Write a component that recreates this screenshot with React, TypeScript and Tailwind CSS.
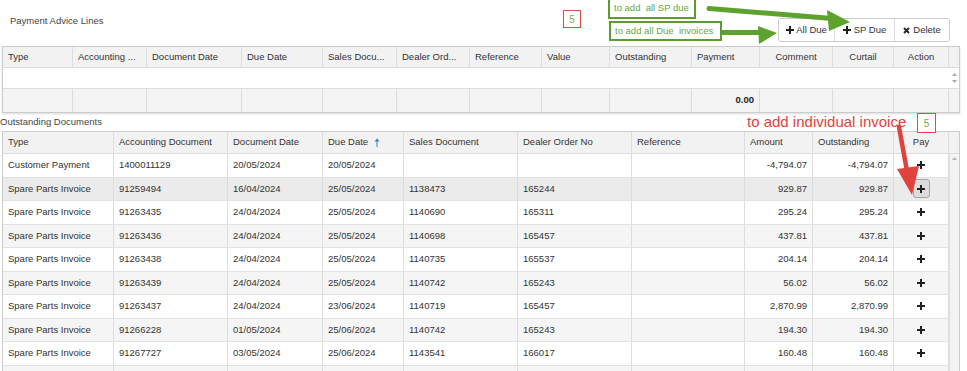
import React from "react";

type Row = {
  type: string;
  acc: string;
  docDate: string;
  dueDate: string;
  sales: string;
  dealer: string;
  amount: string;
};

const rows: Row[] = [
  { type: "Customer Payment", acc: "1400011129", docDate: "20/05/2024", dueDate: "20/05/2024", sales: "", dealer: "", amount: "-4,794.07" },
  { type: "Spare Parts Invoice", acc: "91259494", docDate: "16/04/2024", dueDate: "25/05/2024", sales: "1138473", dealer: "165244", amount: "929.87" },
  { type: "Spare Parts Invoice", acc: "91263435", docDate: "24/04/2024", dueDate: "25/05/2024", sales: "1140690", dealer: "165311", amount: "295.24" },
  { type: "Spare Parts Invoice", acc: "91263436", docDate: "24/04/2024", dueDate: "25/05/2024", sales: "1140698", dealer: "165457", amount: "437.81" },
  { type: "Spare Parts Invoice", acc: "91263438", docDate: "24/04/2024", dueDate: "25/05/2024", sales: "1140735", dealer: "165537", amount: "204.14" },
  { type: "Spare Parts Invoice", acc: "91263439", docDate: "24/04/2024", dueDate: "25/05/2024", sales: "1140742", dealer: "165243", amount: "56.02" },
  { type: "Spare Parts Invoice", acc: "91263437", docDate: "24/04/2024", dueDate: "23/06/2024", sales: "1140719", dealer: "165457", amount: "2,870.99" },
  { type: "Spare Parts Invoice", acc: "91266228", docDate: "01/05/2024", dueDate: "25/06/2024", sales: "1140742", dealer: "165243", amount: "194.30" },
  { type: "Spare Parts Invoice", acc: "91267727", docDate: "03/05/2024", dueDate: "25/06/2024", sales: "1143541", dealer: "166017", amount: "160.48" },
];

const topCols =
  "grid grid-cols-[70px_74px_95px_81px_74px_73px_72px_68px_82px_68px_73px_61px_55px_10px]";
const botCols =
  "grid grid-cols-[111px_114px_95px_81px_114px_114px_113px_68px_81px_55px]";

const PlusIcon = ({ size = 8 }: { size?: number }) => (
  <svg width={size} height={size} viewBox="0 0 8 8" className="shrink-0">
    <rect x="3" y="0" width="2" height="8" fill="#222" />
    <rect x="0" y="3" width="8" height="2" fill="#222" />
  </svg>
);

const XIcon = () => (
  <svg width="7" height="7" viewBox="0 0 7 7" className="shrink-0">
    <path d="M1 1 L6 6 M6 1 L1 6" stroke="#222" strokeWidth="1.8" />
  </svg>
);

const Cell = ({ children, className = "" }: { children?: React.ReactNode; className?: string }) => (
  <div className={`flex items-center px-[5px] border-r border-[#dddddd] whitespace-nowrap overflow-hidden ${className}`}>
    {children}
  </div>
);

export default function App() {
  const topHeads = [
    "Type",
    "Accounting ...",
    "Document Date",
    "Due Date",
    "Sales Docu...",
    "Dealer Ord...",
    "Reference",
    "Value",
    "Outstanding",
    "Payment",
  ];

  return (
    <div className="relative w-[967px] h-[371px] overflow-hidden bg-white text-[#333333] text-[9.5px] font-['Liberation_Sans',Arial,sans-serif]">
      {/* top toolbar */}
      <div className="flex justify-between h-[46px] pr-[17px]">
        <div className="pl-[10px] pt-[14px] text-[#444444]">Payment Advice Lines</div>
        <div className="flex mt-[18px] h-[24px] border border-[#cccccc] rounded-[3px] bg-white">
          <button className="flex items-center justify-center gap-[2px] w-[56px] border-r border-[#dddddd] text-[#333333]">
            <PlusIcon />
            All Due
          </button>
          <button className="flex items-center justify-center gap-[3px] w-[60px] border-r border-[#dddddd] text-[#333333]">
            <PlusIcon />
            SP Due
          </button>
          <button className="flex items-center justify-center gap-[3px] w-[54px] text-[#333333]">
            <XIcon />
            Delete
          </button>
        </div>
      </div>

      {/* payment advice grid */}
      <div className="ml-[2px] w-[958px] border border-[#cccccc] shadow-[0_1px_2px_rgba(0,0,0,0.15)]">
        <div className={`${topCols} h-[21px] bg-[#f2f2f2] border-b border-[#dddddd]`}>
          {topHeads.map((h) => (
            <Cell key={h}>{h}</Cell>
          ))}
          <Cell className="justify-center">Comment</Cell>
          <Cell className="justify-center">Curtail</Cell>
          <Cell className="justify-center">Action</Cell>
          <div />
        </div>
        <div className="flex h-[21px] border-b border-[#dddddd] bg-white">
          <div className="flex-1" />
          <div className="w-[10px] flex flex-col items-center justify-center gap-[4px]">
            <svg width="5" height="3" viewBox="0 0 5 3"><path d="M0 3 L2.5 0 L5 3Z" fill="#aaaaaa" /></svg>
            <svg width="5" height="3" viewBox="0 0 5 3"><path d="M0 0 L2.5 3 L5 0Z" fill="#aaaaaa" /></svg>
          </div>
        </div>
        <div className={`${topCols} h-[23px] bg-[#f4f4f4]`}>
          {Array.from({ length: 9 }).map((_, i) => (
            <Cell key={i} />
          ))}
          <Cell className="justify-end font-bold text-[#222222]">0.00</Cell>
          <Cell />
          <Cell />
          <Cell />
          <div />
        </div>
      </div>

      {/* outstanding documents */}
      <div className="h-[18px] flex items-center text-[#444444]">Outstanding Documents</div>
      <div className="ml-[2px] w-[958px] border border-[#cccccc]">
        <div className="flex h-[22px] bg-[#f2f2f2] border-b border-[#dddddd]">
          <div className={botCols}>
            <Cell>Type</Cell>
            <Cell>Accounting Document</Cell>
            <Cell>Document Date</Cell>
            <Cell className="gap-[6px]">
              Due Date
              <svg width="6" height="9" viewBox="0 0 6 9">
                <path d="M3 9 V1.5" stroke="#3b7fd4" strokeWidth="1" />
                <path d="M0.5 3.5 L3 0.5 L5.5 3.5Z" fill="#3b7fd4" />
              </svg>
            </Cell>
            <Cell>Sales Document</Cell>
            <Cell>Dealer Order No</Cell>
            <Cell>Reference</Cell>
            <Cell>Amount</Cell>
            <Cell>Outstanding</Cell>
            <Cell className="justify-center">Pay</Cell>
          </div>
          <div className="w-[10px]" />
        </div>
        <div className="flex">
          <div className="flex flex-col">
            {rows.map((r, i) => (
              <div
                key={r.acc}
                className={`${botCols} h-[23.5px] border-b border-[#e2e2e2] ${
                  i === 1 ? "bg-[#ebebeb]" : i % 2 === 1 ? "bg-[#f5f5f5]" : "bg-white"
                }`}
              >
                <Cell>{r.type}</Cell>
                <Cell>{r.acc}</Cell>
                <Cell>{r.docDate}</Cell>
                <Cell>{r.dueDate}</Cell>
                <Cell>{r.sales}</Cell>
                <Cell>{r.dealer}</Cell>
                <Cell />
                <Cell className="justify-end">{r.amount}</Cell>
                <Cell className="justify-end">{r.amount}</Cell>
                <Cell className="justify-center">
                  {i === 1 ? (
                    <div className="flex items-center justify-center w-[17px] h-[19px] bg-[#dcdcdc] border border-[#a5a5a5] rounded-[3px]">
                      <PlusIcon />
                    </div>
                  ) : (
                    <PlusIcon />
                  )}
                </Cell>
              </div>
            ))}
            <div className={`${botCols} h-[23.5px] bg-[#f5f5f5]`}>
              {Array.from({ length: 10 }).map((_, i) => (
                <Cell key={i} />
              ))}
            </div>
          </div>
          <div className="w-[10px] bg-[#f3f3f3] border-l border-[#e0e0e0] flex justify-center pt-[3px]">
            <svg width="5" height="3" viewBox="0 0 5 3"><path d="M0 3 L2.5 0 L5 3Z" fill="#b5b5b5" /></svg>
          </div>
        </div>
      </div>

      {/* annotations */}
      <div className="absolute left-[563px] top-[10px] w-[18px] h-[18px] border-[1.5px] border-[#e04a45] flex items-center justify-center text-[10px] text-[#74ad43]">
        5
      </div>
      <div className="absolute left-[608px] top-[-2px] w-[88px] h-[21px] border-2 border-[#5b9b30] bg-white flex items-center pl-[4px] text-[9.5px] text-[#64a83a] whitespace-pre">
        to add  all SP due
      </div>
      <div className="absolute left-[609px] top-[21px] w-[113px] h-[20px] border-2 border-[#5b9b30] bg-white flex items-center pl-[4px] text-[9.5px] text-[#64a83a] whitespace-pre">
        to add all Due  invoices
      </div>
      <div className="absolute left-[747px] top-[113px] text-[15px] leading-[18px] text-[#e5403b]">
        to add individual invoice
      </div>
      <div className="absolute left-[917px] top-[113px] w-[19px] h-[20px] border-[1.5px] border-[#e04a45] bg-white flex items-center justify-center text-[10px] text-[#74ad43]">
        5
      </div>

      <svg className="absolute left-0 top-0 pointer-events-none" width="967" height="371">
        <path d="M709 8.5 L832 18.5" stroke="#5ea22e" strokeWidth="5" strokeLinecap="round" />
        <path d="M827 10 L850 22 L829 31 Z" fill="#5ea22e" />
        <path d="M722 32.5 L761 32.5" stroke="#5ea22e" strokeWidth="5" />
        <path d="M758 26 L777 33 L759 44 Z" fill="#5ea22e" />
        <path d="M899 127 L907 171" stroke="#e0433d" strokeWidth="4.5" strokeLinecap="round" />
        <path d="M897 169 L919 166 L912 195 Z" fill="#e0433d" />
      </svg>
    </div>
  );
}
